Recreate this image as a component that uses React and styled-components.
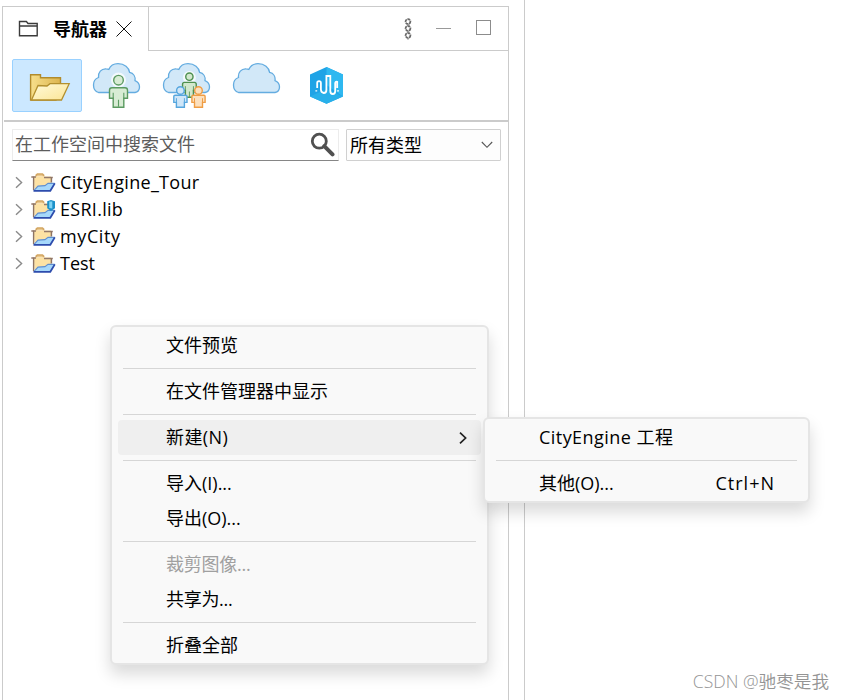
import styled, { createGlobalStyle } from "styled-components";

const projects = [
  { name: "CityEngine_Tour", spacing: 0.31 },
  { name: "ESRI.lib", lib: true, spacing: 0.28 },
  { name: "myCity", spacing: 0.6 },
  { name: "Test", spacing: 0 },
];

const CLOUD =
  "M5.5 29.5 C2 28.5 0.5 25.5 0.5 22 C0.5 18.5 2.5 15.5 5.5 14.5 C4.8 9.5 8.5 5.5 13 5.8 C14 5.8 15 6 15.8 6.4 C17.5 2.5 21 0.7 25 0.7 C31.5 0.7 36 4.8 36.6 9.4 C40.5 10.2 42.6 13.5 42 17.6 C45 18.8 46.5 21.2 46.5 24 C46.5 27 44.8 29 42 29.5 Z";

function Cloud() {
  return (
    <path
      d={CLOUD}
      transform="translate(11 4)"
      fill="#d2e8f8"
      stroke="#64ace0"
      strokeWidth="1.3"
    />
  );
}

function Person({ x, y, scale = 1, fill, stroke }) {
  return (
    <g
      transform={`translate(${x} ${y}) scale(${scale})`}
      fill={fill}
      stroke={stroke}
      strokeWidth={1.4 / scale}
    >
      <path d="M-9 18.5V10.5Q-9 8 -6.5 8H6.5Q9 8 9 10.5V18.5H5.3V27.5H-5.3V18.5Z" />
      <path d="M-5.3 13V19M5.3 13V19M0 20V27" strokeWidth="1.1" />
      <circle cx="0" cy="0.5" r="4.8" />
    </g>
  );
}

// the two small figures in front, with separate shoulders and arms
function SmallPerson({ x, y, fill, stroke }) {
  return (
    <g transform={`translate(${x} ${y})`} fill={fill} stroke={stroke} strokeWidth="1.4">
      <path d="M-6.6 12.2V6.2Q-6.6 5 -5.4 5H5.4Q6.6 5 6.6 6.2V12.2H4V17H-4V12.2Z" />
      <path d="M-4 8V12.5M4 8V12.5" strokeWidth="1" />
      <circle cx="0" cy="0.3" r="3.8" />
    </g>
  );
}

function FolderIcon() {
  return (
    <ToolSvg viewBox="1 1 68 51">
      <defs>
        <linearGradient id="back" x1="0" y1="0" x2="1" y2="0">
          <stop offset="0" stopColor="#f7df8b" />
          <stop offset="1" stopColor="#dcb550" />
        </linearGradient>
        <linearGradient id="front" x1="0" y1="0" x2="1" y2="1">
          <stop offset="0" stopColor="#fffadb" />
          <stop offset="1" stopColor="#fbe595" />
        </linearGradient>
      </defs>
      <path
        d="M18.6 41V15.7H28.5V18.7H48.5V25.5L44 41Z"
        fill="url(#back)"
        stroke="#b18b2d"
        strokeWidth="1.4"
      />
      <path
        d="M19.5 41L26 26.5L35 27L38 24.7H57.2L49.5 41Z"
        fill="url(#front)"
        stroke="#b3902f"
        strokeWidth="1.3"
      />
    </ToolSvg>
  );
}

function UserCloudIcon() {
  return (
    <ToolSvg viewBox="1 1 68 51">
      <Cloud />
      <circle cx="36.5" cy="21" r="7.5" fill="#f3f9fd" />
      <Person x={36.5} y={20.7} fill="#d8ecd4" stroke="#5b9a61" />
    </ToolSvg>
  );
}

function GroupCloudIcon() {
  return (
    <ToolSvg viewBox="1 1 68 51">
      <Cloud />
      <circle cx="37.4" cy="18.5" r="6.5" fill="#f3f9fd" />
      <Person x={37.4} y={17.3} scale={0.76} fill="#d2e8ce" stroke="#4e9050" />
      <SmallPerson x={28.4} y={31.2} fill="#cfe6f8" stroke="#56a6de" />
      <SmallPerson x={46.5} y={31.2} fill="#fce0be" stroke="#ef9d45" />
    </ToolSvg>
  );
}

function CloudIcon() {
  return (
    <ToolSvg viewBox="1 1 68 51">
      <Cloud />
    </ToolSvg>
  );
}

function HexIcon() {
  return (
    <ToolSvg viewBox="1 1 68 51">
      <path d="M34.5 8L51 15.5V37.5L34.5 44.7L18 37.5V15.5Z" fill="#1fa3e6" />
      <path d="M34.5 8L51 15.5V37.5L34.5 26Z" fill="#2fb8f0" />
      <path d="M18 37.5L34.5 30L51 37.5L34.5 44.7Z" fill="#28b0ea" />
      <g fill="none" stroke="#fff" strokeWidth="1.8">
        <path d="M24.3 32.6V31.2M25.2 29V24Q25.2 22.2 27 22.2Q28.9 22.2 28.9 24V30.5Q29 33.5 31.7 34Q34.4 34 34.4 31V17H38.3V32Q38.3 35 40.8 35Q43.2 35 43.2 32V24.5Q43.2 22.2 45.2 22.8V29M46 31.2V32.6" />
      </g>
    </ToolSvg>
  );
}

function ProjectIcon({ lib }) {
  return (
    <svg width="25" height="20" viewBox="0 0.4 25 20">
      <path d="M5.2 4V2.6L6.4 1.4H11.4L12.6 2.6V4" fill="#e9c88f" stroke="#d3a662" strokeWidth="1.6" />
      <path d="M2.8 4H20V16H3.5Z" fill="#fde2a4" />
      <path d="M0.3 4.4H5M13 4.8H21.8" stroke="#94796a" strokeWidth="1.5" />
      <path d="M2.6 4V17.5" stroke="#8e7463" strokeWidth="1.4" />
      <path d="M20.4 5V10" stroke="#8e7463" strokeWidth="1.5" />
      <path d="M3.3 18L7 13.5L14 13L17 10.8H23.8L19.5 18Z" fill="#a6d8fb" />
      <path d="M3.3 17.5L7 13.5L14 13L17 10.8H23.8" fill="none" stroke="#5f8fd0" strokeWidth="1.1" />
      <path d="M23.8 10.8L19.3 18.2H2.5" fill="none" stroke="#2d4cad" strokeWidth="1.8" />
      {lib && (
        <g>
          <path d="M16.2 1.6L20 0.4L24 1.6V8.6L20 11.4L16.2 8.6Z" fill="#1c91c9" />
          <path d="M18.2 1.8H21.3V9L18.2 8.5Z" fill="#7fd4f5" />
        </g>
      )}
    </svg>
  );
}

function Chevron({ width, height, color, stroke }) {
  return (
    <svg width={width} height={height} viewBox="0 0 8 12">
      <path d="M1 0.7L6.6 6L1 11.3" fill="none" stroke={color} strokeWidth={stroke} />
    </svg>
  );
}

export default function App() {
  return (
    <Page>
      <GlobalStyle />
      <Navigator>
        <Header>
          <Tab>
            <svg width="20" height="18" viewBox="0 0 20 18">
              <path
                d="M1.5 15.8V1.5H8.4L10 3.5H19.2V15.8ZM1.5 6H19.2"
                fill="none"
                stroke="#3b3b3b"
                strokeWidth="1.4"
              />
            </svg>
            <TabTitle>导航器</TabTitle>
            <svg width="16" height="16" viewBox="0 0 16 16">
              <path d="M0.5 0.5L15.5 15.5M15.5 0.5L0.5 15.5" stroke="#111" strokeWidth="1" />
            </svg>
          </Tab>
          <HeaderTools>
            <svg width="8" height="24" viewBox="0 0 8 24">
              <g fill="none" stroke="#6a6a6a" strokeWidth="1.8" strokeDasharray="2.6 0.6">
                <circle cx="4" cy="4.6" r="2.4" />
                <circle cx="4" cy="11.4" r="2.4" />
                <circle cx="4" cy="18.4" r="2.4" />
              </g>
              <path d="M4 7V9M4 13.8V16M4 20.8V22.6" stroke="#8a8a8a" strokeWidth="1.6" />
            </svg>
            <Minimize />
            <Maximize />
          </HeaderTools>
        </Header>

        <Toolbar>
          <ToolButton $active>
            <FolderIcon />
          </ToolButton>
          <ToolButton>
            <UserCloudIcon />
          </ToolButton>
          <ToolButton>
            <GroupCloudIcon />
          </ToolButton>
          <ToolButton>
            <CloudIcon />
          </ToolButton>
          <ToolButton>
            <HexIcon />
          </ToolButton>
        </Toolbar>

        <FilterRow>
          <SearchBox>
            <span>在工作空间中搜索文件</span>
            <svg width="25" height="25" viewBox="0 0 25 25">
              <circle cx="9.3" cy="9.2" r="7" fill="none" stroke="#505050" strokeWidth="2.8" />
              <path d="M14.3 14.2L22.5 22.4" stroke="#505050" strokeWidth="4" strokeLinecap="round" />
            </svg>
          </SearchBox>
          <TypeSelect>
            <span>所有类型</span>
            <svg width="12" height="8" viewBox="0 0 12 8">
              <path d="M0.8 1L6 6.3L11.2 1" fill="none" stroke="#555" strokeWidth="1.1" />
            </svg>
          </TypeSelect>
        </FilterRow>

        <Tree>
          {projects.map((p) => (
            <TreeRow key={p.name}>
              <Chevron width={8} height={13} color="#8a8a8a" stroke={1.4} />
              <ProjectIcon lib={p.lib} />
              <TreeName $spacing={p.spacing}>{p.name}</TreeName>
            </TreeRow>
          ))}
        </Tree>
      </Navigator>
      <Editor />

      <ContextMenu>
        <MenuItem>文件预览</MenuItem>
        <Separator />
        <MenuItem>在文件管理器中显示</MenuItem>
        <Separator />
        <MenuItem $active $spacing={0.4}>
          新建(N)
          <Chevron width={8} height={12} color="#222" stroke={1.7} />
        </MenuItem>
        <Separator />
        <MenuItem>导入(I)...</MenuItem>
        <MenuItem>导出(O)...</MenuItem>
        <Separator />
        <MenuItem $disabled $spacing={-0.25}>
          裁剪图像...
        </MenuItem>
        <MenuItem $spacing={-0.3}>共享为...</MenuItem>
        <Separator />
        <MenuItem>折叠全部</MenuItem>
      </ContextMenu>

      <SubMenu>
        <MenuItem $spacing={0.45}>CityEngine 工程</MenuItem>
        <Separator />
        <MenuItem>
          其他(O)...
          <Shortcut>Ctrl+N</Shortcut>
        </MenuItem>
      </SubMenu>

      <Watermark>CSDN @驰枣是我</Watermark>
    </Page>
  );
}

const GlobalStyle = createGlobalStyle`
  * {
    box-sizing: border-box;
  }
  body {
    margin: 0;
    background: #fff;
  }
  svg {
    display: block;
    flex-shrink: 0;
  }
`;

const Page = styled.div`
  position: relative;
  display: flex;
  width: 844px;
  height: 700px;
  overflow: hidden;
  font-family: "Open Sans", "Noto Sans CJK SC", sans-serif;
  font-size: 18px;
  color: #000;
  white-space: nowrap;
`;

const Navigator = styled.div`
  width: 507px;
  margin: 6px 15px 0 2px;
  border: 1px solid #cbcbcb;
  border-bottom: none;
`;

const Editor = styled.div`
  flex: 1;
  border-left: 1px solid #cbcbcb;
`;

const Header = styled.div`
  display: flex;
  height: 44px;
`;

const Tab = styled.div`
  display: flex;
  align-items: center;
  width: 146px;
  padding: 0 0 1px 15px;
  border-right: 1px solid #cbcbcb;
`;

const TabTitle = styled.span`
  margin: 0 9px 0 15px;
  font-weight: 700;
  line-height: 24px;
`;

const HeaderTools = styled.div`
  display: flex;
  flex: 1;
  align-items: center;
  justify-content: flex-end;
  padding-right: 17px;
  border-bottom: 1px solid #cbcbcb;
`;

const Minimize = styled.div`
  width: 15px;
  height: 1px;
  margin: 0 25px 0 24px;
  background: #999;
`;

const Maximize = styled.div`
  width: 15px;
  height: 15px;
  margin-bottom: 2px;
  border: 1px solid #8c8c8c;
`;

const Toolbar = styled.div`
  display: flex;
  height: 71px;
  margin-left: 1px;
  padding: 8px 0 0 8px;
  border-bottom: 2px solid #cbcbcb;
`;

const ToolButton = styled.div`
  width: 70px;
  height: 53px;
  border: 1px solid ${(p) => (p.$active ? "#99d1ff" : "transparent")};
  border-radius: 2px;
  background: ${(p) => (p.$active ? "#cce8ff" : "transparent")};
`;

const ToolSvg = styled.svg`
  width: 68px;
  height: 51px;
`;

const FilterRow = styled.div`
  display: flex;
  gap: 7px;
  padding: 7px 7px 0 9px;
  line-height: 28px;
`;

const SearchBox = styled.div`
  display: flex;
  align-items: center;
  justify-content: space-between;
  width: 327px;
  height: 32px;
  padding: 0 3px 2px 2px;
  border: 1px solid #ececec;
  border-bottom-color: #868686;
  color: #5c5c5c;
`;

const TypeSelect = styled.div`
  display: flex;
  align-items: center;
  justify-content: space-between;
  width: 155px;
  height: 32px;
  padding: 0 7px 0 3px;
  border: 1px solid #d0d0d0;
  border-radius: 1px;
  background: #fdfdfd;
`;

const Tree = styled.div`
  padding: 8px 0 0 12px;
`;

const TreeRow = styled.div`
  display: flex;
  align-items: center;
  height: 27px;

  svg + svg {
    margin-left: 8px;
  }
`;

const TreeName = styled.span`
  margin-left: 4px;
  line-height: 27px;
  letter-spacing: ${(p) => p.$spacing}px;
`;

const Menu = styled.div`
  position: absolute;
  padding-top: 1px;
  border: 2px solid #e5e5e5;
  border-radius: 6px;
  background: #f9f9f9;
  box-shadow: 0 9px 16px rgba(0, 0, 0, 0.15);
`;

const ContextMenu = styled(Menu)`
  left: 110px;
  top: 325px;
  width: 379px;
`;

const SubMenu = styled(Menu)`
  left: 483px;
  top: 417px;
  width: 327px;
`;

const MenuItem = styled.div`
  display: flex;
  align-items: center;
  justify-content: space-between;
  height: 35px;
  margin: 0 6px;
  padding: 0 14px 0 48px;
  border-radius: 4px;
  line-height: 35px;
  letter-spacing: ${(p) => p.$spacing || 0}px;
  color: ${(p) => (p.$disabled ? "#a0a0a0" : "#000")};
  background: ${(p) => (p.$active ? "#efefef" : "transparent")};
`;

const Separator = styled.div`
  height: 1px;
  margin: 5px 11px;
  background: #d6d6d6;
`;

const Shortcut = styled.span`
  margin-right: 13px;
  letter-spacing: 1px;
`;

const Watermark = styled.div`
  position: absolute;
  right: 15px;
  bottom: 7px;
  font-size: 17.6px;
  font-weight: 350;
  line-height: 24px;
  color: #949494;
`;
